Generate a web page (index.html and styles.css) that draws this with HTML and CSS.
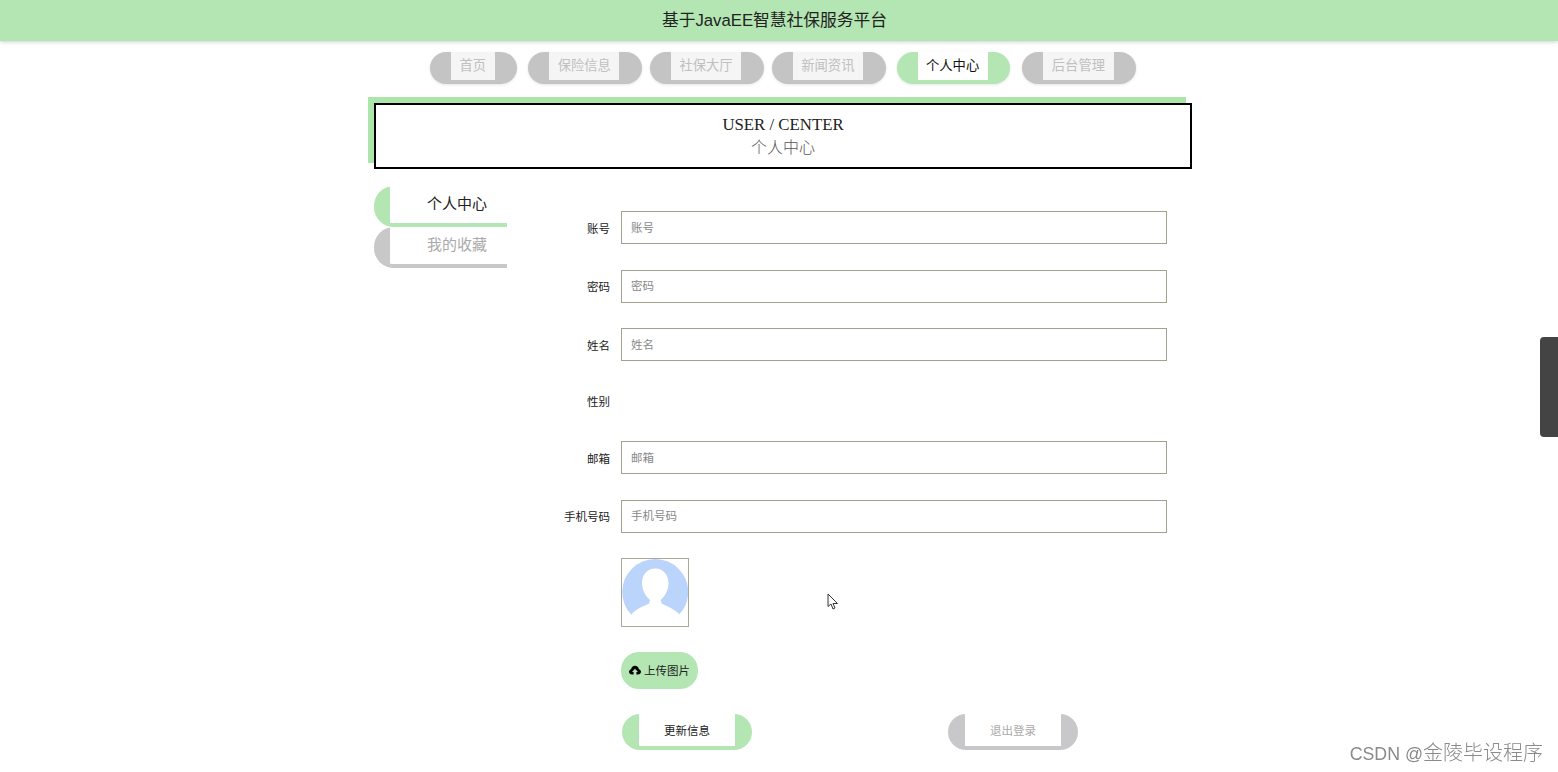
FILE: index.html
```html
<!DOCTYPE html>
<html lang="zh-CN">
  <head>
    <meta charset="UTF-8" />
    <meta name="viewport" content="width=device-width, initial-scale=1.0" />
    <title>个人中心</title>
    <link rel="stylesheet" href="styles.css">
  </head>
  <body>
    <header class="top-bar">基于JavaEE智慧社保服务平台</header>

    <div class="page">
      <!-- Main navigation -->
      <nav class="nav">
        <a class="nav-item"><span>首页</span></a>
        <a class="nav-item"><span>保险信息</span></a>
        <a class="nav-item"><span>社保大厅</span></a>
        <a class="nav-item"><span>新闻资讯</span></a>
        <a class="nav-item active"><span>个人中心</span></a>
        <a class="nav-item"><span>后台管理</span></a>
      </nav>

      <div class="title-box">
        <div class="title-en">USER / CENTER</div>
        <div class="title-cn">个人中心</div>
      </div>

      <div class="main">
        <ul class="side-menu">
          <li class="side-item active">个人中心</li>
          <li class="side-item">我的收藏</li>
        </ul>

        <form class="form">
          <div class="form-row">
            <label class="form-label" for="username">账号</label>
            <input class="form-input" id="username" type="text" placeholder="账号" />
          </div>
          <div class="form-row">
            <label class="form-label" for="password">密码</label>
            <input class="form-input" id="password" type="text" placeholder="密码" />
          </div>
          <div class="form-row">
            <label class="form-label" for="name">姓名</label>
            <input class="form-input" id="name" type="text" placeholder="姓名" />
          </div>
          <div class="form-row form-row-short">
            <label class="form-label">性别</label>
          </div>
          <div class="form-row">
            <label class="form-label" for="email">邮箱</label>
            <input class="form-input" id="email" type="text" placeholder="邮箱" />
          </div>
          <div class="form-row">
            <label class="form-label" for="phone">手机号码</label>
            <input class="form-input" id="phone" type="text" placeholder="手机号码" />
          </div>

          <div class="form-offset avatar-row">
            <div class="avatar">
              <svg width="66" height="67" viewBox="0 0 66 67">
                <circle cx="33.2" cy="33" r="33" fill="#bbd4fb" />
                <path fill="#fff" d="M9.7 55C14 50 21 47 27 44.7L28 41C23 37 20 30 20 24C20 15 26 9.5 33.3 9.5C40.5 9.5 46.5 15 46.5 24C46.5 30 43.5 37 38.7 41L39.7 44.7C46 47 52 50 57.3 55L57.3 67L9.7 67Z" />
              </svg>
            </div>
          </div>

          <div class="form-offset">
            <button type="button" class="upload-btn">
              <svg width="12" height="10" viewBox="0 0 12 10">
                <path fill="#000" d="M3 9.5C1.3 9.5 0 8.3 0 6.8C0 5.5 .9 4.5 2.1 4.2C2.4 2.2 4 .8 6 .8C8 .8 9.6 2.2 9.9 4.2C11.1 4.5 12 5.5 12 6.8C12 8.3 10.7 9.5 9 9.5L7.4 9.5L7.4 7L9 7L6 3.8L3 7L4.6 7L4.6 9.5Z" />
              </svg>
              上传图片
            </button>
          </div>

          <div class="form-actions">
            <button type="button" class="action-btn"><span>更新信息</span></button>
            <button type="button" class="action-btn logout"><span>退出登录</span></button>
          </div>
        </form>
      </div>
    </div>

    <!-- Things lying over the page -->
    <div class="side-handle"></div>
    <svg class="cursor" width="12" height="18" viewBox="0 0 12 18">
      <path fill="#fff" stroke="#333" stroke-width="1" d="M1 1L1 13.5L4 11L6 16L8 15L6 10.5L10.5 10.5Z" />
    </svg>
    <div class="watermark"><span class="watermark-en">CSDN @</span>金陵毕设程序</div>
  </body>
</html>
```

FILE: styles.css
```css
/* Basic reset and styling */
body {
  margin: 0;
  height: 772px;
  overflow: hidden;
  background-color: #fff;
  color: #222;
  font-family: "Liberation Sans", "Noto Sans CJK SC", sans-serif;
}

.top-bar {
  height: 41px;
  padding-right: 9px;
  line-height: 41px;
  text-align: center;
  font-size: 16.75px;
  background-color: #b3e6b2;
  box-shadow: 0 1px 4px rgba(0, 0, 0, 0.2);
}

.page {
  width: 818px;
  margin-left: 374px;
}

/* Top navigation */
.nav {
  display: flex;
  gap: 8px;
  padding: 11px 0 0 56px;
}

.nav-item {
  height: 28px;
  padding: 0 22.6px 4px 21px;
  border-radius: 16px;
  background-color: #c4c4c4;
  box-shadow: 0 1px 3px rgba(0, 0, 0, 0.1);
}

.nav-item:nth-child(2),
.nav-item:nth-child(5) {
  margin-left: 3px;
}

.nav-item:nth-child(6) {
  margin-left: 4px;
}

.nav-item span {
  display: block;
  height: 28px;
  padding: 0 8.5px;
  line-height: 28px;
  font-size: 13.3px;
  color: #c0c0c0;
  background-color: #f5f5f5;
}

.nav-item.active {
  background-color: #b3e6b2;
}

.nav-item.active span {
  color: #111;
  background-color: #fff;
}

/* Title box with the green offset behind it */
.title-box {
  box-sizing: border-box;
  height: 66px;
  margin-top: 19px;
  padding-top: 8px;
  border: 2px solid #000;
  text-align: center;
  background-color: #fff;
  box-shadow: -6px -6px 0 0 #ace6ac;
}

.title-en {
  line-height: 23px;
  font-family: "Liberation Serif", "Noto Sans CJK SC", serif;
  font-size: 16.8px;
  color: #222;
}

.title-cn {
  line-height: 23px;
  font-size: 16px;
  font-weight: 300;
  color: #555;
}

.main {
  display: flex;
  align-items: flex-start;
  padding-top: 17px;
}

/* Left menu */
.side-menu {
  width: 133px;
  margin: 0;
  padding: 0;
  list-style: none;
}

.side-item {
  box-sizing: border-box;
  height: 41px;
  padding-left: 33px;
  line-height: 36px;
  text-align: center;
  font-size: 15px;
  color: #aaa;
  background: linear-gradient(90deg, #c8c8c8 16px, #fff 16px);
  border-bottom: 4px solid #c8c8c8;
  border-radius: 20px 0 0 20px;
}

.side-item.active {
  color: #222;
  background: linear-gradient(90deg, #b3e6b2 16px, #fff 16px);
  border-bottom-color: #b3e6b2;
}

/* Form */
.form {
  display: flex;
  flex-direction: column;
  gap: 25.55px;
  padding-top: 25px;
}

.form-row {
  display: flex;
  align-items: center;
  height: 33px;
}

.form-row-short {
  height: 29px;
}

.form-label {
  width: 103px;
  margin-right: 11px;
  text-align: right;
  font-size: 11.5px;
  color: #222;
}

.form-input {
  box-sizing: border-box;
  width: 546px;
  height: 33px;
  padding: 0 9px;
  border: 1px solid #a3a38d;
  border-radius: 0;
  outline: none;
  font-family: inherit;
  font-size: 11.5px;
}

.form-input::placeholder {
  color: #888;
}

.form-offset {
  padding-left: 114px;
}

.avatar-row {
  height: 68px;
}

.avatar {
  box-sizing: border-box;
  width: 68px;
  height: 69px;
  border: 1px solid #a9a996;
}

.avatar svg {
  display: block;
}

.upload-btn {
  display: flex;
  align-items: center;
  gap: 3px;
  width: 77px;
  height: 37px;
  padding: 0 0 0 8px;
  border: none;
  border-radius: 18px;
  font-family: inherit;
  font-size: 11.5px;
  color: #222;
  background-color: #b3e6b2;
  cursor: pointer;
}

.form-actions {
  display: flex;
  gap: 196px;
  padding-left: 115px;
}

.action-btn {
  width: 130px;
  height: 36px;
  padding: 0 17px 4px;
  border: none;
  border-radius: 18px;
  font-family: inherit;
  background-color: #b3e6b2;
  cursor: pointer;
}

.action-btn span {
  display: block;
  height: 32px;
  line-height: 34px;
  font-size: 11.5px;
  color: #222;
  background-color: #fff;
}

.action-btn.logout {
  background-color: #c8c8ca;
}

.action-btn.logout span {
  color: #aaa;
}

/* Overlays */
.side-handle {
  position: fixed;
  top: 337px;
  right: 0;
  width: 18px;
  height: 100px;
  border-radius: 4px 0 0 4px;
  background-color: #444;
}

.cursor {
  position: fixed;
  top: 593px;
  left: 827px;
}

.watermark {
  position: fixed;
  right: 15px;
  top: 740px;
  line-height: 26px;
  font-size: 20px;
  font-weight: 300;
  color: #8a8a8a;
}

.watermark-en {
  font-size: 17.8px;
}
```
